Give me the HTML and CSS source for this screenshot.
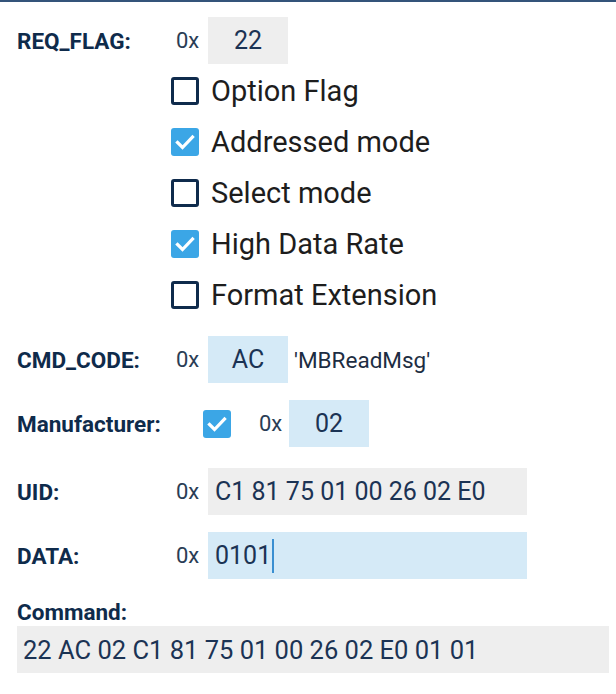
FILE: index.html
```html
<!DOCTYPE html>
<html>
<head>
<meta charset="utf-8">
<link rel="stylesheet" href="styles.css">
</head>
<body>
<div class="page">
  <div class="row req">
    <span class="label">REQ_FLAG:</span>
    <span class="prefix">0x</span>
    <span class="field gray short center">22</span>
  </div>
  <ul class="flags">
    <li class="flag"><span class="cb"></span><span>Option Flag</span></li>
    <li class="flag"><span class="cb checked"><svg viewBox="0 0 28 28"><path d="M6.5 14.5 L11.5 19.5 L21.5 9"/></svg></span><span>Addressed mode</span></li>
    <li class="flag"><span class="cb"></span><span>Select mode</span></li>
    <li class="flag"><span class="cb checked"><svg viewBox="0 0 28 28"><path d="M6.5 14.5 L11.5 19.5 L21.5 9"/></svg></span><span>High Data Rate</span></li>
    <li class="flag"><span class="cb"></span><span>Format Extension</span></li>
  </ul>
  <div class="row cmd">
    <span class="label">CMD_CODE:</span>
    <span class="prefix">0x</span>
    <span class="field blue short center">AC</span>
    <span class="name">'MBReadMsg'</span>
  </div>
  <div class="row manu">
    <span class="label wide">Manufacturer:</span>
    <span class="cb checked"><svg viewBox="0 0 28 28"><path d="M6.5 14.5 L11.5 19.5 L21.5 9"/></svg></span>
    <span class="prefix manu-prefix">0x</span>
    <span class="field blue short center">02</span>
  </div>
  <div class="row uid">
    <span class="label">UID:</span>
    <span class="prefix">0x</span>
    <span class="field gray long">C1 81 75 01 00 26 02 E0</span>
  </div>
  <div class="row data">
    <span class="label">DATA:</span>
    <span class="prefix">0x</span>
    <span class="field blue long">0101<span class="caret"></span></span>
  </div>
  <div class="command-label">Command:</div>
  <div class="command">22 AC 02 C1 81 75 01 00 26 02 E0 01 01</div>
</div>
</body>
</html>
```

FILE: styles.css
```css
html, body {
  margin: 0;
  padding: 0;
  background: #ffffff;
}
body {
  border-top: 2px solid #34547a;
  font-family: Roboto, "Liberation Sans", sans-serif;
}
.page {
  padding: 15px 0 0 17px;
}
.row {
  display: flex;
  align-items: center;
  height: 47px;
}
.label {
  width: 159px;
  font-size: 22.5px;
  font-weight: bold;
  color: #0f2b4b;
}
.label.wide {
  width: 186px;
}
.prefix {
  width: 32px;
  font-size: 22px;
  color: #2a3d55;
}
.manu-prefix {
  margin-left: 28px;
  width: 30px;
}
.field {
  height: 47px;
  display: flex;
  align-items: center;
  font-size: 25px;
  color: #1b3354;
  box-sizing: border-box;
}
.field.center {
  justify-content: center;
}
.field.short {
  width: 80px;
}
.field.long {
  width: 319px;
  padding-left: 7px;
}
.gray {
  background: #eeeeee;
}
.blue {
  background: #d5eaf7;
}
.caret {
  display: inline-block;
  width: 2px;
  height: 34px;
  margin-left: 1px;
  background: #3a8fd1;
}
.name {
  margin-left: 6px;
  font-size: 22.5px;
  color: #1d2d42;
}
.flags {
  list-style: none;
  margin: 1px 0 0 154px;
  padding: 0;
}
.flag {
  display: flex;
  align-items: center;
  height: 51px;
  font-size: 29px;
  color: #1d1d1d;
}
.flag .cb {
  margin-right: 12px;
}
.cb {
  width: 28px;
  height: 28px;
  box-sizing: border-box;
  border: 3px solid #0f2b4c;
  border-radius: 3px;
  display: inline-block;
  flex: none;
}
.cb.checked {
  border: none;
  background: #3ba6e6;
}
.cb svg {
  display: block;
  width: 28px;
  height: 28px;
  fill: none;
  stroke: #ffffff;
  stroke-width: 3.2;
  stroke-linecap: square;
}
.cmd {
  margin-top: 16px;
}
.manu {
  margin-top: 17px;
}
.uid {
  margin-top: 21px;
}
.data {
  margin-top: 17px;
}
.command-label {
  margin-top: 20px;
  height: 27px;
  line-height: 27px;
  font-size: 22.5px;
  font-weight: bold;
  color: #0f2b4b;
}
.command {
  width: 592px;
  height: 47px;
  box-sizing: border-box;
  padding-left: 6px;
  display: flex;
  align-items: center;
  background: #eeeeee;
  font-size: 25.5px;
  color: #1b3354;
}
```
